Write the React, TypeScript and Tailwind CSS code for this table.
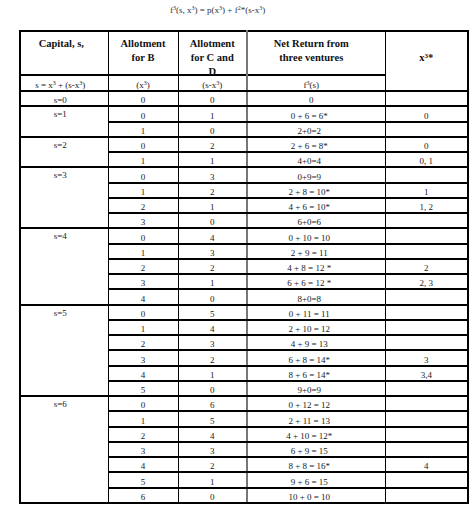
import React from "react";

type Row = [string, string, string, string];

const groups: { s: string; rows: Row[] }[] = [
    {
        s: "s=1",
        rows: [
            ["0", "1", "0 + 6 = 6*", "0"],
            ["1", "0", "2+0=2", ""],
        ],
    },
    {
        s: "s=2",
        rows: [
            ["0", "2", "2 + 6 = 8*", "0"],
            ["1", "1", "4+0=4", "0, 1"],
        ],
    },
    {
        s: "s=3",
        rows: [
            ["0", "3", "0+9=9", ""],
            ["1", "2", "2 + 8 = 10*", "1"],
            ["2", "1", "4 + 6 = 10*", "1, 2"],
            ["3", "0", "6+0=6", ""],
        ],
    },
    {
        s: "s=4",
        rows: [
            ["0", "4", "0 + 10 = 10", ""],
            ["1", "3", "2 + 9 = 11", ""],
            ["2", "2", "4 + 8 = 12 *", "2"],
            ["3", "1", "6 + 6 = 12 *", "2, 3"],
            ["4", "0", "8+0=8", ""],
        ],
    },
    {
        s: "s=5",
        rows: [
            ["0", "5", "0 + 11 = 11", ""],
            ["1", "4", "2 + 10 = 12", ""],
            ["2", "3", "4 + 9 = 13", ""],
            ["3", "2", "6 + 8 = 14*", "3"],
            ["4", "1", "8 + 6 = 14*", "3,4"],
            ["5", "0", "9+0=9", ""],
        ],
    },
    {
        s: "s=6",
        rows: [
            ["0", "6", "0 + 12 = 12", ""],
            ["1", "5", "2 + 11 = 13", ""],
            ["2", "4", "4 + 10 = 12*", ""],
            ["3", "3", "6 + 9 = 15", ""],
            ["4", "2", "8 + 8 = 16*", "4"],
            ["5", "1", "9 + 6 = 15", ""],
            ["6", "0", "10 + 0 = 10", ""],
        ],
    },
];

// data cells sit low in the row, text touching the rule below
const cell = "h-[15.25px] p-0 align-bottom text-center leading-[10px] border-y-2 border-y-black";

export default function App() {
    return (
        <div className="w-[474px] h-[520px] bg-white text-[#1a1a1a] font-['Liberation_Serif','Times_New_Roman',serif]">
            {/* title */}
            <div className="pt-[5px] h-[30px] pl-[170px] text-[9px] leading-[10px] text-[#333]">
                f<sup className="text-[6px]">3</sup>(s, x<sup className="text-[6px]">3</sup>) = p(x
                <sup className="text-[6px]">3</sup>) + f<sup className="text-[6px]">2</sup>*(s-x
                <sup className="text-[6px]">3</sup>)
            </div>

            <table className="ml-[19px] w-[448px] table-fixed border-collapse border-2 border-black text-[9px]">
                <colgroup>
                    <col className="w-[88px]" />
                    <col className="w-[70px]" />
                    <col className="w-[69px]" />
                    <col className="w-[138px]" />
                    <col className="w-[83px]" />
                </colgroup>
                <thead>
                    <tr className="h-[44px] text-[10.5px] leading-[14px] text-[#111]">
                        <th className="align-top pt-[5px] pr-[6px] font-bold border border-black">Capital, s,</th>
                        <th className="align-top pt-[5px] font-bold border border-black">
                            Allotment
                            <br />
                            for B
                        </th>
                        <th className="align-top pt-[5px] font-bold border border-black border-r-2 border-r-[#777]">
                            <div className="h-[30px] overflow-visible">
                                Allotment
                                <br />
                                for C and
                                <br />D
                            </div>
                        </th>
                        <th className="align-top pt-[5px] pr-[10px] font-bold border border-black">
                            Net Return from
                            <br />
                            three ventures
                        </th>
                        <th rowSpan={2} className="align-middle pb-[6px] font-bold border border-black">
                            x<sup className="text-[7px]">3</sup>*
                        </th>
                    </tr>
                    <tr className="h-[16px] font-normal">
                        <td className={cell + " pr-[8px] border-x border-x-black"}>
                            s = x<sup className="text-[6px]">3</sup> + (s-x<sup className="text-[6px]">3</sup>)
                        </td>
                        <td className={cell + " border-x border-x-black"}>
                            (x<sup className="text-[6px]">3</sup>)
                        </td>
                        <td className={cell + " border-l border-l-black border-r-2 border-r-[#777]"}>
                            (s-x<sup className="text-[6px]">3</sup>)
                        </td>
                        <td className={cell + " pr-[10px] border-x border-x-black"}>
                            f<sup className="text-[6px]">3</sup>(s)
                        </td>
                    </tr>
                </thead>
                <tbody>
                    <tr>
                        <td className={cell + " pr-[8px] border-x border-x-black"}>s=0</td>
                        <td className={cell + " border-x border-x-black"}>0</td>
                        <td className={cell + " border-l border-l-black border-r-2 border-r-[#777]"}>0</td>
                        <td className={cell + " pr-[10px] border-x border-x-black"}>0</td>
                        <td className={cell + " border-x border-x-black"}></td>
                    </tr>
                    {groups.map((g) =>
                        g.rows.map((r, i) => (
                            <tr key={g.s + i}>
                                {i === 0 && (
                                    <td
                                        rowSpan={g.rows.length}
                                        className="p-0 pt-[1px] pr-[8px] align-top text-center leading-[12px] border-2 border-black border-r border-r-black"
                                    >
                                        {g.s}
                                    </td>
                                )}
                                <td className={cell + " border-x border-x-black"}>{r[0]}</td>
                                <td className={cell + " border-l border-l-black border-r-2 border-r-[#777]"}>{r[1]}</td>
                                <td className={cell + " pr-[14px] border-x border-x-black"}>{r[2]}</td>
                                <td className={cell + " border-x border-x-black"}>{r[3]}</td>
                            </tr>
                        ))
                    )}
                </tbody>
            </table>
        </div>
    );
}
